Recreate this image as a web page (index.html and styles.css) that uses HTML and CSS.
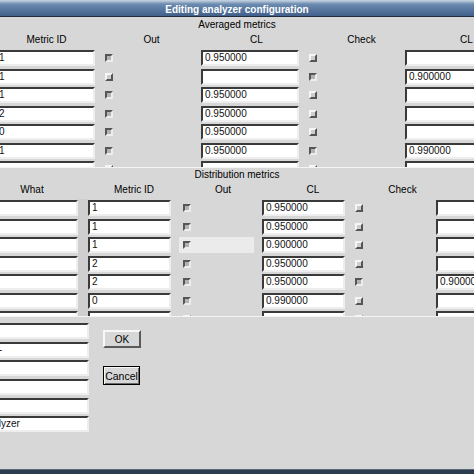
FILE: index.html
```html
<!DOCTYPE html>
<html lang="en">
<head>
  <meta charset="UTF-8">
  <meta name="viewport" content="width=device-width, initial-scale=1.0">
  <title>Editing analyzer configuration</title>
  <link rel="stylesheet" href="styles.css">
</head>
<body>
  <div class="window">
    <div class="titlebar">Editing analyzer configuration</div>

    <section class="avg">
      <div class="caption">Averaged metrics</div>
      <div class="head">
        <span>Metric ID</span><span>Out</span><span>CL</span><span>Check</span><span>CL</span>
      </div>
      <div class="rows">
        <div class="row">
          <div class="entry">1</div>
          <div class="band"><span class="cb on"></span></div>
          <div class="entry">0.950000</div>
          <div class="band"><span class="cb"></span></div>
          <div class="entry"></div>
        </div>
        <div class="row">
          <div class="entry">1</div>
          <div class="band"><span class="cb"></span></div>
          <div class="entry"></div>
          <div class="band"><span class="cb on"></span></div>
          <div class="entry">0.900000</div>
        </div>
        <div class="row">
          <div class="entry">1</div>
          <div class="band"><span class="cb on"></span></div>
          <div class="entry">0.950000</div>
          <div class="band"><span class="cb"></span></div>
          <div class="entry"></div>
        </div>
        <div class="row">
          <div class="entry">2</div>
          <div class="band"><span class="cb on"></span></div>
          <div class="entry">0.950000</div>
          <div class="band"><span class="cb"></span></div>
          <div class="entry"></div>
        </div>
        <div class="row">
          <div class="entry">0</div>
          <div class="band"><span class="cb on"></span></div>
          <div class="entry">0.950000</div>
          <div class="band"><span class="cb"></span></div>
          <div class="entry"></div>
        </div>
        <div class="row">
          <div class="entry">1</div>
          <div class="band"><span class="cb on"></span></div>
          <div class="entry">0.950000</div>
          <div class="band"><span class="cb on"></span></div>
          <div class="entry">0.990000</div>
        </div>
        <div class="row">
          <div class="entry"></div>
          <div class="band"><span class="cb"></span></div>
          <div class="entry"></div>
          <div class="band"><span class="cb"></span></div>
          <div class="entry"></div>
        </div>
      </div>
    </section>

    <section class="dist">
      <div class="caption">Distribution metrics</div>
      <div class="head">
        <span>What</span><span>Metric ID</span><span>Out</span><span>CL</span><span>Check</span>
      </div>
      <div class="rows">
        <div class="row">
          <div class="entry what"></div><div class="gap"></div>
          <div class="entry">1</div>
          <div class="band"><span class="cbw"><span class="cb on"></span></span></div>
          <div class="entry">0.950000</div>
          <div class="band chk"><span class="cb"></span></div>
          <div class="entry"></div>
        </div>
        <div class="row">
          <div class="entry what"></div><div class="gap"></div>
          <div class="entry">1</div>
          <div class="band"><span class="cbw"><span class="cb on"></span></span></div>
          <div class="entry">0.950000</div>
          <div class="band chk"><span class="cb"></span></div>
          <div class="entry"></div>
        </div>
        <div class="row">
          <div class="entry what"></div><div class="gap"></div>
          <div class="entry">1</div>
          <div class="band"><span class="cbw active"><span class="cb on"></span></span></div>
          <div class="entry">0.900000</div>
          <div class="band chk"><span class="cb"></span></div>
          <div class="entry"></div>
        </div>
        <div class="row">
          <div class="entry what"></div><div class="gap"></div>
          <div class="entry">2</div>
          <div class="band"><span class="cbw"><span class="cb on"></span></span></div>
          <div class="entry">0.950000</div>
          <div class="band chk"><span class="cb"></span></div>
          <div class="entry"></div>
        </div>
        <div class="row">
          <div class="entry what"></div><div class="gap"></div>
          <div class="entry">2</div>
          <div class="band"><span class="cbw"><span class="cb on"></span></span></div>
          <div class="entry">0.950000</div>
          <div class="band chk"><span class="cb on"></span></div>
          <div class="entry">0.900000</div>
        </div>
        <div class="row">
          <div class="entry what"></div><div class="gap"></div>
          <div class="entry">0</div>
          <div class="band"><span class="cbw"><span class="cb on"></span></span></div>
          <div class="entry">0.990000</div>
          <div class="band chk"><span class="cb"></span></div>
          <div class="entry"></div>
        </div>
        <div class="row">
          <div class="entry what"></div><div class="gap"></div>
          <div class="entry"></div>
          <div class="band"><span class="cbw"><span class="cb"></span></span></div>
          <div class="entry"></div>
          <div class="band chk"><span class="cb"></span></div>
          <div class="entry"></div>
        </div>
      </div>
    </section>

    <section class="footer">
      <div class="fields">
        <div class="row"><div class="entry"></div></div>
        <div class="row"><div class="entry">rms-</div></div>
        <div class="row"><div class="entry"></div></div>
        <div class="row"><div class="entry"></div></div>
        <div class="row"><div class="entry"></div></div>
        <div class="row"><div class="entry">analyzer</div></div>
      </div>
      <div class="buttons">
        <button class="btn">OK</button>
        <button class="btn cancel">Cancel</button>
      </div>
    </section>

    <div class="frame-bottom"></div>
  </div>
</body>
</html>
```

FILE: styles.css
```css
body {
  margin: 0;
  background: #d7d7d7;
  color: #000;
  font-family: "Liberation Sans", Arial, sans-serif;
  font-size: 10px;
  overflow: hidden;
}

.window {
  width: 474px;
  height: 474px;
  display: flex;
  flex-direction: column;
  overflow: hidden;
}

.titlebar {
  flex: none;
  height: 14px;
  padding-top: 2px;
  line-height: 15px;
  text-align: center;
  font-weight: bold;
  color: #fff;
  background: linear-gradient(#c9d6e3 0, #9fb4cb 2px, #6d8cb1 4px, #52729b 11px, #41618a 16px);
  border-bottom: 1px solid #1f2d3f;
}

section {
  flex: none;
  overflow: hidden;
}

.caption {
  height: 14px;
  line-height: 14px;
  text-align: center;
  white-space: nowrap;
}

.head {
  display: flex;
  height: 16px;
  line-height: 16px;
}
.head span {
  flex: none;
  text-align: center;
  white-space: nowrap;
}

.rows {
  overflow: hidden;
  box-sizing: border-box;
}

.row {
  display: flex;
  align-items: center;
  height: 18.5px;
}

.entry {
  flex: none;
  box-sizing: border-box;
  height: 16px;
  line-height: 12px;
  padding: 0 2px;
  background: #fff;
  border: 2px solid;
  border-color: #3a3a3a #eeeeee #eeeeee #3a3a3a;
  white-space: nowrap;
  overflow: hidden;
  color: #111;
}

.band {
  flex: none;
  align-self: stretch;
  display: flex;
  align-items: center;
  box-sizing: border-box;
}

.cb {
  display: block;
  width: 4px;
  height: 4px;
  border: 2px solid;
  border-color: #f6f6f6 #555 #555 #f6f6f6;
  background: #cdcdcd;
}
.cb.on {
  border-color: #555 #ededed #ededed #555;
  background: #b2b2b2;
}

/* averaged metrics */
.avg .caption { height: 15px; line-height: 15px; }
.avg .head { margin-left: -6px; height: 15px; line-height: 15px; }
.avg .head span { width: 105px; }
.avg .rows { height: 120px; padding-top: 2px; }
.avg .row { margin-left: -3px; }
.avg .entry { width: 98px; }
.avg .entry:first-child { margin-left: -2px; width: 100px; }
.avg .band { width: 106px; padding-left: 10px; }

/* distribution metrics */
.dist { border-top: 1px solid #f4f4f4; }
.dist .head { margin-left: -26px; }
.dist .head span:nth-child(1) { width: 116px; }
.dist .head span:nth-child(2) { width: 88px; }
.dist .head span:nth-child(3) { width: 90px; }
.dist .head span:nth-child(4) { width: 90px; }
.dist .head span:nth-child(5) { width: 89px; }
.dist .rows { height: 118px; padding-top: 1px; }
.dist .row { margin-left: -20px; }
.dist .entry { width: 83px; }
.dist .entry.what { width: 98px; }
.dist .gap {
  flex: none;
  align-self: stretch;
  width: 10px;
  background: #cfcfcf;
}
.dist .band { width: 91px; padding-left: 8px; }
.dist .band.chk { padding-left: 10px; }

.cbw {
  display: flex;
  align-items: center;
  width: 75px;
  height: 16px;
  padding-left: 4px;
  box-sizing: border-box;
}
.cbw.active { background: #ebebeb; }

/* footer: remaining fields and buttons */
.footer {
  flex: 1;
  display: flex;
  border-top: 1px solid #f4f4f4;
}

.fields {
  flex: none;
  margin-left: -22px;
  padding-top: 5px;
}
.fields .row { height: 18.6px; }
.fields .entry { width: 111px; }

.buttons {
  display: flex;
  flex-direction: column;
  align-items: flex-start;
  gap: 18px;
  padding: 13px 0 0 14px;
}

.btn {
  box-sizing: border-box;
  width: 38px;
  height: 18px;
  padding: 0;
  font-family: inherit;
  font-size: 10px;
  color: #000;
  background: #d7d7d7;
  border: 2px solid;
  border-color: #f8f8f8 #5a5a5a #5a5a5a #f8f8f8;
}
.btn.cancel {
  width: 37px;
  height: 19px;
  font-size: 10.5px;
  border: 1px solid #000;
  box-shadow: inset 1px 1px #f8f8f8, inset -1px -1px #6a6a6a;
}

.frame-bottom {
  flex: none;
  height: 4px;
  background: #2d3c4f;
  border-top: 1px solid #56687c;
}
```
